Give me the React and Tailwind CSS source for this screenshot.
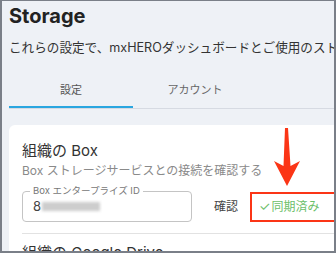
import React from "react";

const font = { fontFamily: '"Inter", "Noto Sans CJK JP", sans-serif' };

const Arrow = () => (
  <svg className="absolute left-[268px] top-[124px]" width="32" height="64" viewBox="0 0 32 64">
    <path d="M15 3 L18 3 L20.5 41 L30 36 L17 61 L4 36 L13.5 41 Z" fill="#fb3516" />
  </svg>
);

export default function App() {
  return (
    <div
      className="relative w-[336px] h-[253px] overflow-hidden bg-[#eef1f6] border-l-2 border-r-2 border-t border-b-2 border-[#7a7f88]"
      style={font}
    >
      <div className="pl-[7px]">
        <h1 className="text-[20px] leading-[28px] font-bold text-[#222] pt-[1px]">Storage</h1>
        <p className="mt-[9px] text-[12.6px] leading-[18px] text-[#333] whitespace-nowrap">
          これらの設定で、mxHEROダッシュボードとご使用のストレージサービスを接続します。
        </p>
        <div className="mt-[25px] flex border-b border-[#d6dae2]">
          <div className="w-[124px] h-[26px] flex items-start justify-center text-[11px] text-[#555] border-b-2 border-[#2aa6e0] -mb-px">
            設定
          </div>
          <div className="w-[124px] h-[26px] flex items-start justify-center text-[11px] text-[#666]">
            アカウント
          </div>
        </div>
        <div className="mt-[16px] bg-white rounded-l-md pl-[13px] pt-[16px]">
          <div className="text-[15px] leading-[20px] text-[#333]">組織の Box</div>
          <div className="text-[12px] leading-[17px] text-[#8a8a8a] mt-[1px] whitespace-nowrap">
            Box ストレージサービスとの接続を確認する
          </div>
          <div className="flex items-center mt-[12px]">
            <div className="relative shrink-0 w-[170px] h-[31px] border border-[#c4c4c4] rounded-[4px] flex items-center pl-[10px]">
              <span className="absolute left-[7px] -top-[8px] bg-white px-[3px] text-[9.5px] leading-[14px] text-[#777] whitespace-nowrap">
                Box エンタープライズ ID
              </span>
              <span className="text-[13px] text-[#444]">8</span>
              <div className="ml-[1px] w-[58px] h-[9px] bg-[#cdcdcd] blur-[1.5px]" />
            </div>
            <span className="ml-[22px] shrink-0 whitespace-nowrap text-[12px] text-[#444]">確認</span>
            <div className="ml-[12px] shrink-0 w-[86px] h-[30px] border-2 border-[#fb3516] flex items-center pl-[7px] text-[12px] text-[#6cc06a] whitespace-nowrap">
              <span className="mr-[1px] text-[13px]">✓</span>同期済み
            </div>
          </div>
          <div className="mt-[11px] border-t border-[#e2e2e2]" />
          <div className="mt-[9px] text-[15px] leading-[20px] text-[#333] whitespace-nowrap">組織の Google Drive</div>
        </div>
      </div>
      <Arrow />
    </div>
  );
}
